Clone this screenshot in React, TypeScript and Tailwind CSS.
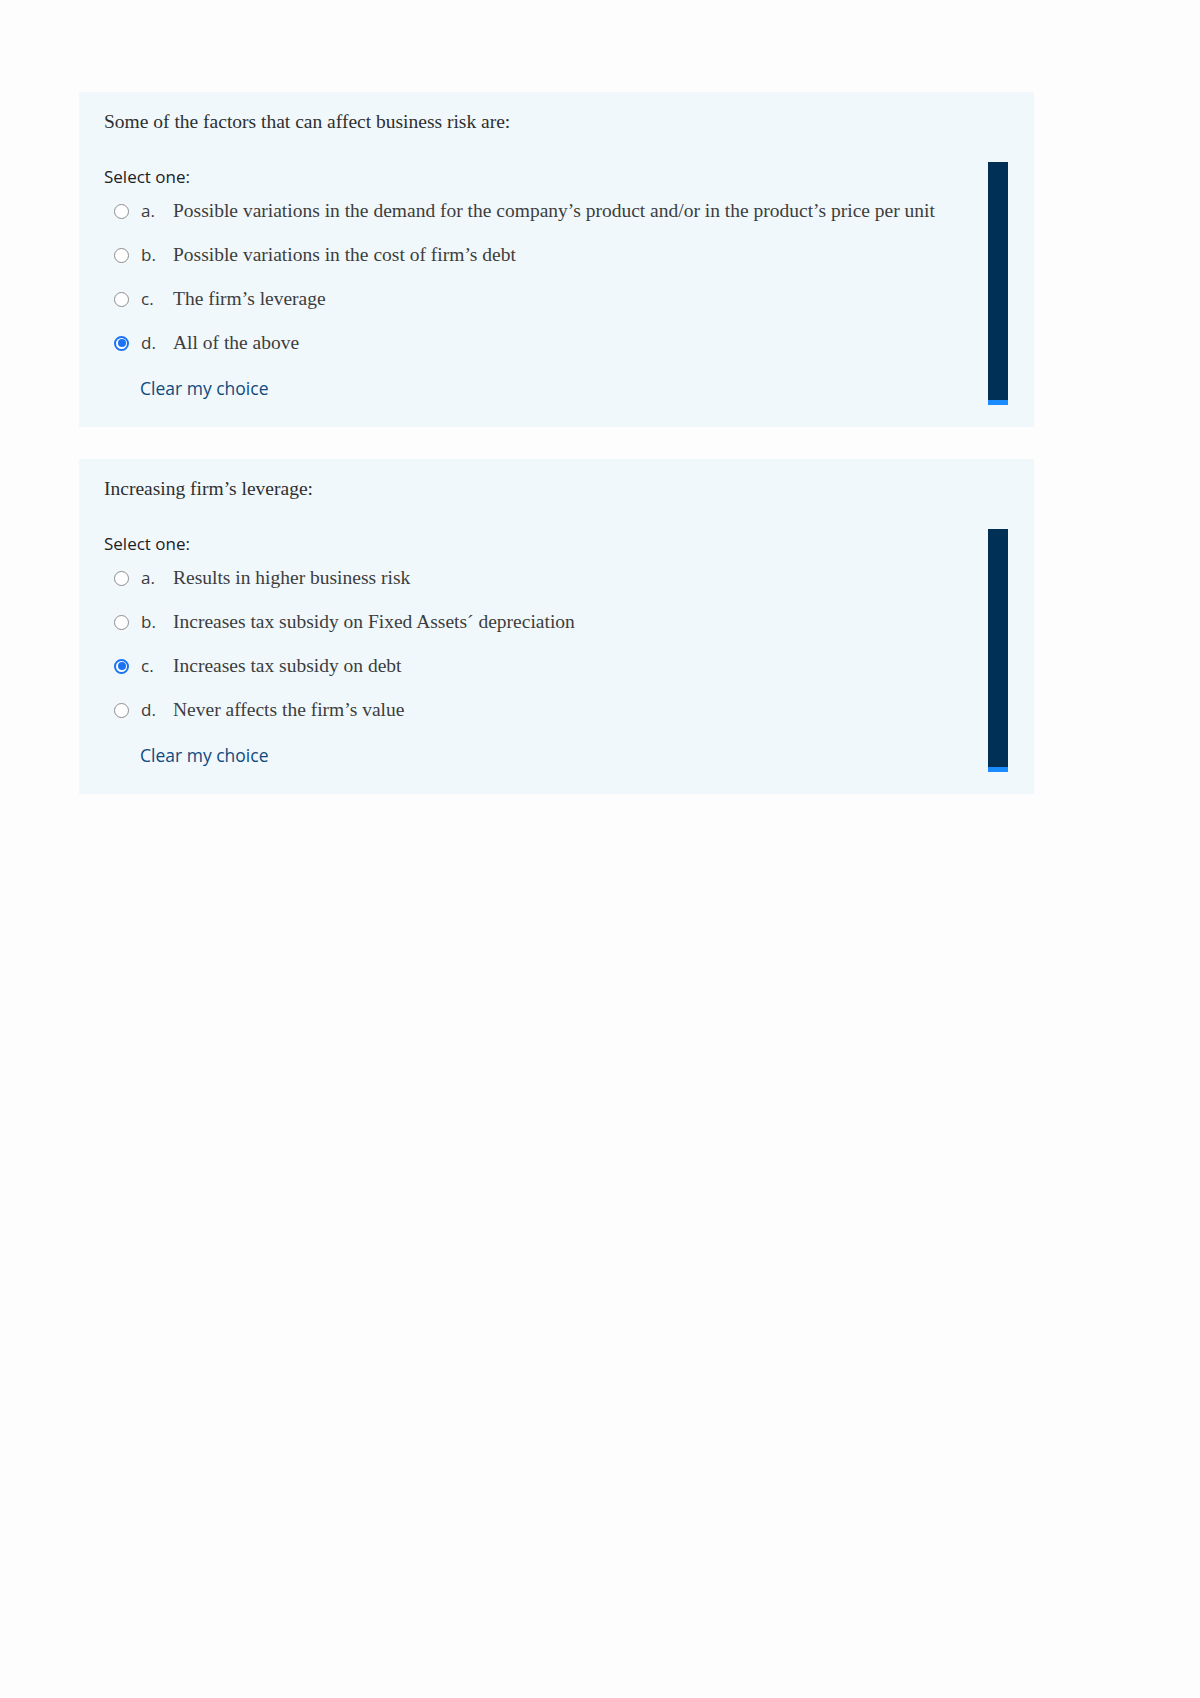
const questions = [
  {
    text: "Some of the factors that can affect business risk are:",
    options: [
      "Possible variations in the demand for the company’s product and/or in the product’s price per unit",
      "Possible variations in the cost of firm’s debt",
      "The firm’s leverage",
      "All of the above",
    ],
    selected: 3,
  },
  {
    text: "Increasing firm’s leverage:",
    options: [
      "Results in higher business risk",
      "Increases tax subsidy on Fixed Assets´ depreciation",
      "Increases tax subsidy on debt",
      "Never affects the firm’s value",
    ],
    selected: 2,
  },
];

const letters = ["a.", "b.", "c.", "d."];

function Radio({ checked }: { checked: boolean }) {
  if (checked) {
    return (
      <span className="flex h-[15px] w-[15px] shrink-0 items-center justify-center rounded-full border-2 border-[#1a73f5] bg-white">
        <span className="h-[8px] w-[8px] rounded-full bg-[#1a73f5]" />
      </span>
    );
  }
  return <span className="h-[15px] w-[15px] shrink-0 rounded-full border border-[#8d8d8d] bg-white" />;
}

function QuestionCard({ q }: { q: (typeof questions)[number] }) {
  return (
    <div className="flex h-[335px] w-[955px] bg-[#f0f8fc]">
      <div className="flex-1 pl-[25px] pt-[18px]">
        <p className="text-[19.5px] leading-[24px] text-[#2f2f2f]" style={{ fontFamily: '"Liberation Serif", serif' }}>
          {q.text}
        </p>
        <p className="mt-[32px] text-[17px] leading-[22px] text-[#1d2125]" style={{ fontFamily: '"Open Sans", sans-serif' }}>
          Select one:
        </p>
        <div className="mt-[1px]">
          {q.options.map((opt, i) => (
            <div key={i} className="flex h-[44px] items-center pl-[10px]">
              <Radio checked={i === q.selected} />
              <span className="ml-[12px] w-[32px] text-[17px] text-[#3a3a3a]" style={{ fontFamily: '"Open Sans", sans-serif' }}>
                {letters[i]}
              </span>
              <span className="text-[19.5px] text-[#3d3d3d]" style={{ fontFamily: '"Liberation Serif", serif' }}>
                {opt}
              </span>
            </div>
          ))}
        </div>
        <p className="mt-[12px] pl-[36px] text-[17.5px] leading-[22px] text-[#0f4a7c]" style={{ fontFamily: '"Open Sans", sans-serif' }}>
          Clear my choice
        </p>
      </div>
      <div className="mr-[26px] mt-[70px] h-[243px] w-[20px] border-b-[5px] border-[#1a8cff] bg-[#003056]" />
    </div>
  );
}

export default function App() {
  return (
    <div className="min-h-[1698px] bg-[#fdfdfd] pl-[79px] pt-[92px]">
      <div className="flex flex-col gap-[32px]">
        {questions.map((q, i) => (
          <QuestionCard key={i} q={q} />
        ))}
      </div>
    </div>
  );
}
